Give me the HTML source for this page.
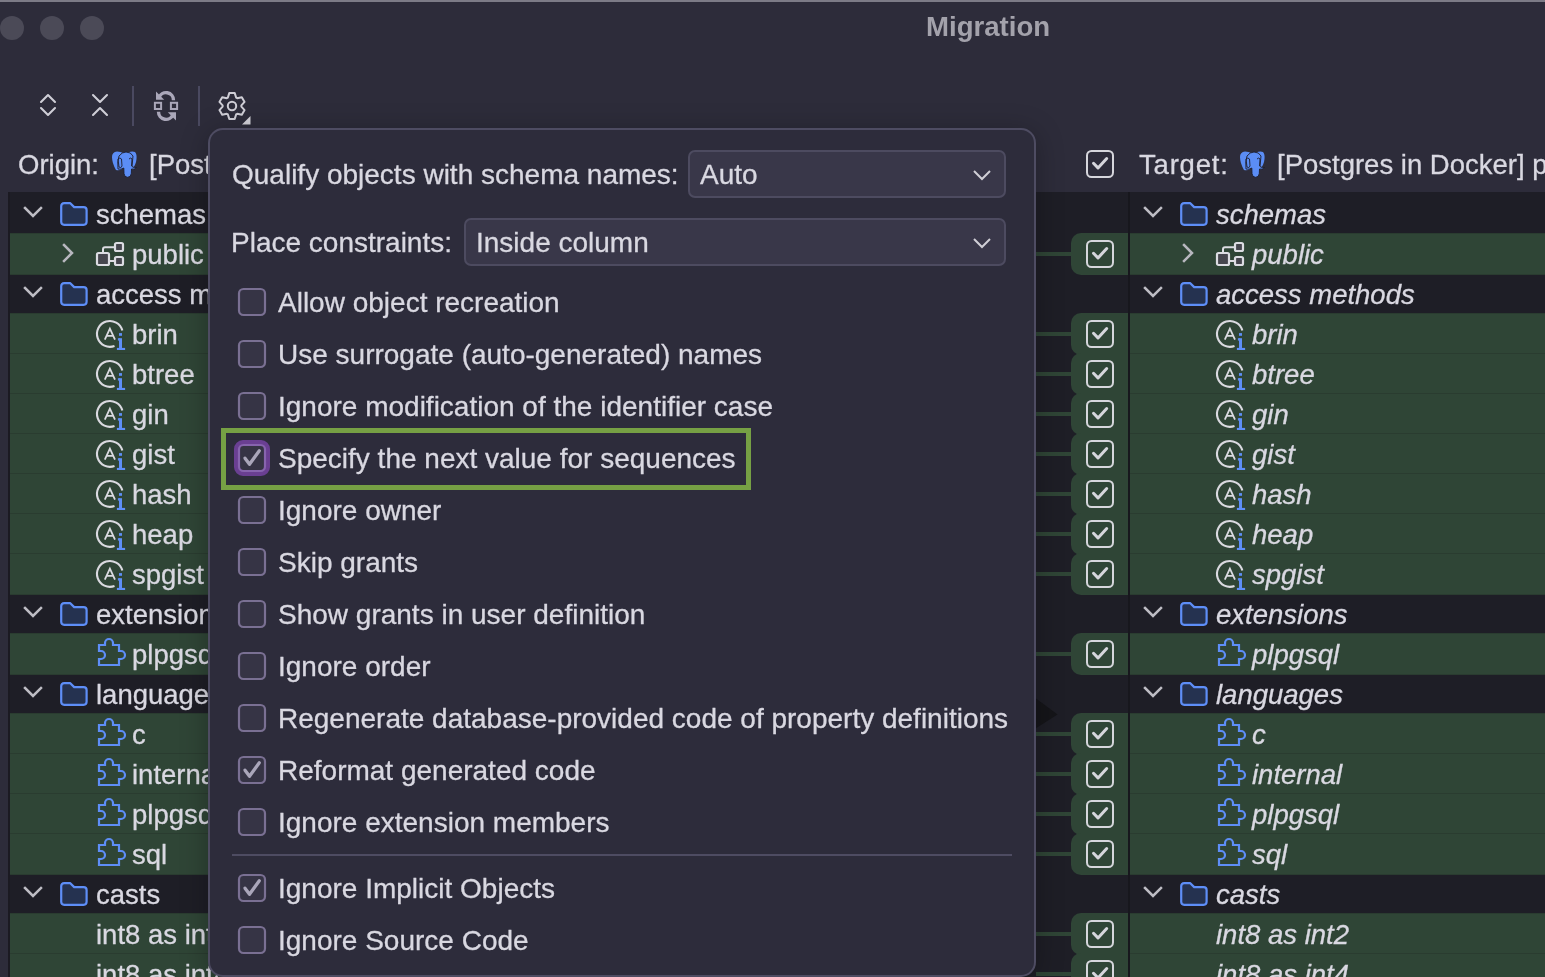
<!DOCTYPE html><html><head><meta charset="utf-8"><style>
html,body{margin:0;padding:0;}
body{width:1545px;height:977px;overflow:hidden;position:relative;background:#2d2c3a;font-family:"Liberation Sans", sans-serif;}
.t{position:absolute;white-space:pre;line-height:1;will-change:transform;-webkit-text-stroke:0.3px currentColor;}
svg{overflow:visible}
</style></head><body>
<div style="position:absolute;left:0px;top:0px;width:1545px;height:2px;background:#7c7b86;"></div>
<div style="position:absolute;left:0px;top:16px;width:24px;height:24px;border-radius:50%;background:#4b4a57"></div>
<div style="position:absolute;left:40px;top:16px;width:24px;height:24px;border-radius:50%;background:#4b4a57"></div>
<div style="position:absolute;left:80px;top:16px;width:24px;height:24px;border-radius:50%;background:#4b4a57"></div>
<div class="t" style="left:926px;top:13.24px;font-size:27.6px;color:#a3a2ab;font-weight:bold;font-style:normal;-webkit-text-stroke:0">Migration</div>
<svg style="position:absolute;left:38px;top:92px;" width="20" height="26" viewBox="0 0 20 26"><path d="M3,10 L10,3 L17,10 M3,16 L10,23 L17,16" fill="none" stroke="#cfced6" stroke-width="2.1" stroke-linecap="round" stroke-linejoin="round"/></svg>
<svg style="position:absolute;left:90px;top:92px;" width="20" height="26" viewBox="0 0 20 26"><path d="M3,3 L10,10 L17,3 M3,23 L10,16 L17,23" fill="none" stroke="#cfced6" stroke-width="2.1" stroke-linecap="round" stroke-linejoin="round"/></svg>
<div style="position:absolute;left:132px;top:86px;width:2px;height:40px;background:#4a4960;"></div>
<div style="position:absolute;left:198px;top:86px;width:2px;height:40px;background:#4a4960;"></div>
<svg style="position:absolute;left:152px;top:89px;" width="28" height="34" viewBox="0 0 28 34"><path d="M21.5,11.2 A7.5,7.5 0 0 0 6.95,8.6" fill="none" stroke="#aaa7b9" stroke-width="3.4"/><path d="M4,2.4 L4,10.8 L12.2,10.8 Z" fill="#aaa7b9"/><path d="M6.5,22.8 A7.5,7.5 0 0 0 21.05,25.4" fill="none" stroke="#aaa7b9" stroke-width="3.4"/><path d="M24,31.6 L24,23.2 L15.8,23.2 Z" fill="#aaa7b9"/><rect x="2.9" y="13.8" width="6.2" height="6.2" fill="none" stroke="#aaa7b9" stroke-width="2"/><rect x="18.9" y="13.8" width="6.2" height="6.2" fill="none" stroke="#aaa7b9" stroke-width="2"/></svg>
<svg style="position:absolute;left:218px;top:92px;" width="28" height="28" viewBox="0 0 28 28"><path d="M11.26,1.09 L16.74,1.09 L18.12,5.55 L19.26,6.21 L23.81,5.17 L26.55,9.92 L23.38,13.34 L23.38,14.66 L26.55,18.08 L23.81,22.83 L19.26,21.79 L18.12,22.45 L16.74,26.91 L11.26,26.91 L9.88,22.45 L8.74,21.79 L4.19,22.83 L1.45,18.08 L4.62,14.66 L4.62,13.34 L1.45,9.92 L4.19,5.17 L8.74,6.21 L9.88,5.55 Z" fill="none" stroke="#cfced6" stroke-width="2" stroke-linejoin="round"/><circle cx="14" cy="14" r="4.2" fill="none" stroke="#cfced6" stroke-width="2"/></svg>
<svg style="position:absolute;left:241px;top:115px;" width="10" height="10" viewBox="0 0 10 10"><path d="M9.5,1 V9.5 H1 Z" fill="#d4d3da"/></svg>
<div class="t" style="left:17.5px;top:151.02px;font-size:27.5px;color:#d9d8e1;font-weight:normal;font-style:normal;">Origin:</div>
<svg style="position:absolute;left:109.5px;top:151px;" width="28" height="28" viewBox="0 0 28 28"><path d="M2,6 Q2,1 7,0.5 Q11,0.5 13,2 L12,18 Q9,20 6,19 Q2,12 2,6 Z" fill="#5b8df5"/><path d="M18,1.5 Q22,0 25,1 Q27,3 26.5,8 Q26,14 22,18 L17,14 Z" fill="#5b8df5"/><path d="M9,5 Q12,1 16,1 Q21,1 23,5 L22,15.5 Q25,17.5 26.5,16.5 Q24.5,19 21.5,18 L21.3,22.5 Q21,26.3 17.6,26.3 Q14.2,26.3 14,22.5 L13.8,17 Q11,19 8,18 Q7,10 9,5 Z" fill="#5b8df5" stroke="#1d1d2a" stroke-width="0.9"/><path d="M8,8 Q10,6 11.5,8 L12,15 Q11,18 9,16 Z" fill="none" stroke="#1d1d2a" stroke-width="0.9"/><path d="M19,8 Q21,6 22,8 L21.5,15" fill="none" stroke="#1d1d2a" stroke-width="0.9"/></svg>
<div class="t" style="left:149px;top:151.02px;font-size:27.5px;color:#d9d8e1;font-weight:normal;font-style:normal;">[Postgres in Docker] postgres</div>
<svg style="position:absolute;left:1086px;top:150px;" width="28" height="28" viewBox="0 0 28 28"><rect x="1" y="1" width="26" height="26" rx="4.5" fill="#2d2c3a" stroke="#d6d6dc" stroke-width="2"/><path d="M7.5,13.3 L12,17.9 L20.7,8.6" fill="none" stroke="#d6d6dc" stroke-width="3" stroke-linecap="round" stroke-linejoin="round"/></svg>
<div class="t" style="left:1138.5px;top:151.02px;font-size:27.5px;color:#d9d8e1;font-weight:normal;font-style:normal;letter-spacing:0.8px">Target:</div>
<svg style="position:absolute;left:1238px;top:151px;" width="28" height="28" viewBox="0 0 28 28"><path d="M2,6 Q2,1 7,0.5 Q11,0.5 13,2 L12,18 Q9,20 6,19 Q2,12 2,6 Z" fill="#5b8df5"/><path d="M18,1.5 Q22,0 25,1 Q27,3 26.5,8 Q26,14 22,18 L17,14 Z" fill="#5b8df5"/><path d="M9,5 Q12,1 16,1 Q21,1 23,5 L22,15.5 Q25,17.5 26.5,16.5 Q24.5,19 21.5,18 L21.3,22.5 Q21,26.3 17.6,26.3 Q14.2,26.3 14,22.5 L13.8,17 Q11,19 8,18 Q7,10 9,5 Z" fill="#5b8df5" stroke="#1d1d2a" stroke-width="0.9"/><path d="M8,8 Q10,6 11.5,8 L12,15 Q11,18 9,16 Z" fill="none" stroke="#1d1d2a" stroke-width="0.9"/><path d="M19,8 Q21,6 22,8 L21.5,15" fill="none" stroke="#1d1d2a" stroke-width="0.9"/></svg>
<div class="t" style="left:1277px;top:151.02px;font-size:27.5px;color:#d9d8e1;font-weight:normal;font-style:normal;">[Postgres in Docker] postgres</div>
<div style="position:absolute;left:8px;top:192px;width:2px;height:785px;background:#1b1a22;"></div>
<div style="position:absolute;left:10px;top:192px;width:1118px;height:785px;background:#1e1e26;"></div>
<div style="position:absolute;left:1128px;top:192px;width:2px;height:785px;background:#17171d;"></div>
<div style="position:absolute;left:1130px;top:192px;width:415px;height:785px;background:#1e1e26;"></div>
<div style="position:absolute;left:10px;top:233px;width:1000px;height:42px;background:#2f4536;"></div>
<div style="position:absolute;left:10px;top:233px;width:1000px;height:1px;background:#2a3c30;"></div>
<div style="position:absolute;left:10px;top:274px;width:1000px;height:1px;background:#2a3c30;"></div>
<div style="position:absolute;left:10px;top:313px;width:1000px;height:40px;background:#2f4536;"></div>
<div style="position:absolute;left:10px;top:313px;width:1000px;height:1px;background:#2a3c30;"></div>
<div style="position:absolute;left:10px;top:353px;width:1000px;height:40px;background:#2f4536;"></div>
<div style="position:absolute;left:10px;top:353px;width:1000px;height:1px;background:#2a3c30;"></div>
<div style="position:absolute;left:10px;top:393px;width:1000px;height:40px;background:#2f4536;"></div>
<div style="position:absolute;left:10px;top:393px;width:1000px;height:1px;background:#2a3c30;"></div>
<div style="position:absolute;left:10px;top:433px;width:1000px;height:40px;background:#2f4536;"></div>
<div style="position:absolute;left:10px;top:433px;width:1000px;height:1px;background:#2a3c30;"></div>
<div style="position:absolute;left:10px;top:473px;width:1000px;height:40px;background:#2f4536;"></div>
<div style="position:absolute;left:10px;top:473px;width:1000px;height:1px;background:#2a3c30;"></div>
<div style="position:absolute;left:10px;top:513px;width:1000px;height:40px;background:#2f4536;"></div>
<div style="position:absolute;left:10px;top:513px;width:1000px;height:1px;background:#2a3c30;"></div>
<div style="position:absolute;left:10px;top:553px;width:1000px;height:42px;background:#2f4536;"></div>
<div style="position:absolute;left:10px;top:553px;width:1000px;height:1px;background:#2a3c30;"></div>
<div style="position:absolute;left:10px;top:594px;width:1000px;height:1px;background:#2a3c30;"></div>
<div style="position:absolute;left:10px;top:633px;width:1000px;height:42px;background:#2f4536;"></div>
<div style="position:absolute;left:10px;top:633px;width:1000px;height:1px;background:#2a3c30;"></div>
<div style="position:absolute;left:10px;top:674px;width:1000px;height:1px;background:#2a3c30;"></div>
<div style="position:absolute;left:10px;top:713px;width:1000px;height:40px;background:#2f4536;"></div>
<div style="position:absolute;left:10px;top:713px;width:1000px;height:1px;background:#2a3c30;"></div>
<div style="position:absolute;left:10px;top:753px;width:1000px;height:40px;background:#2f4536;"></div>
<div style="position:absolute;left:10px;top:753px;width:1000px;height:1px;background:#2a3c30;"></div>
<div style="position:absolute;left:10px;top:793px;width:1000px;height:40px;background:#2f4536;"></div>
<div style="position:absolute;left:10px;top:793px;width:1000px;height:1px;background:#2a3c30;"></div>
<div style="position:absolute;left:10px;top:833px;width:1000px;height:42px;background:#2f4536;"></div>
<div style="position:absolute;left:10px;top:833px;width:1000px;height:1px;background:#2a3c30;"></div>
<div style="position:absolute;left:10px;top:874px;width:1000px;height:1px;background:#2a3c30;"></div>
<div style="position:absolute;left:10px;top:913px;width:1000px;height:40px;background:#2f4536;"></div>
<div style="position:absolute;left:10px;top:913px;width:1000px;height:1px;background:#2a3c30;"></div>
<div style="position:absolute;left:10px;top:953px;width:1000px;height:42px;background:#2f4536;"></div>
<div style="position:absolute;left:10px;top:953px;width:1000px;height:1px;background:#2a3c30;"></div>
<div style="position:absolute;left:10px;top:994px;width:1000px;height:1px;background:#2a3c30;"></div>
<svg style="position:absolute;left:23px;top:206px;" width="20" height="14" viewBox="0 0 20 14"><path d="M2,2 L10,10 L18,2" fill="none" stroke="#bebdc4" stroke-width="2.5" stroke-linecap="square"/></svg>
<svg style="position:absolute;left:60px;top:202px;" width="28" height="24" viewBox="0 0 28 24"><path d="M1.2,4.2 Q1.2,1.2 4.2,1.2 H10.3 L14.2,5.1 H23.6 Q26.6,5.1 26.6,8.1 V19.8 Q26.6,22.8 23.6,22.8 H4.2 Q1.2,22.8 1.2,19.8 Z" fill="#253250" stroke="#5e8ef7" stroke-width="2.2" stroke-linejoin="round"/></svg>
<div class="t" style="left:95.5px;top:201.22px;font-size:27.5px;color:#d9d8e1;font-weight:normal;font-style:normal;">schemas</div>
<svg style="position:absolute;left:61.5px;top:243px;" width="14" height="20" viewBox="0 0 14 20"><path d="M2,2 L10,10 L2,18" fill="none" stroke="#b8b7bf" stroke-width="2.5" stroke-linecap="square"/></svg>
<svg style="position:absolute;left:95px;top:241px;" width="30" height="26" viewBox="0 0 30 26"><path d="M8,11 V8.3 Q8,6.3 10,6.3 H20 M15,20.1 H20" fill="none" stroke="#dcdce2" stroke-width="2"/><rect x="2" y="12" width="12" height="12" fill="#46464e" stroke="#dcdce2" stroke-width="2.2" rx="1.5"/><rect x="20" y="2" width="8" height="8" fill="#46464e" stroke="#dcdce2" stroke-width="2.2" rx="1.5"/><rect x="20" y="16" width="8" height="8" fill="#46464e" stroke="#dcdce2" stroke-width="2.2" rx="1.5"/></svg>
<div class="t" style="left:132px;top:241.22px;font-size:27.5px;color:#d9d8e1;font-weight:normal;font-style:normal;">public</div>
<svg style="position:absolute;left:23px;top:286px;" width="20" height="14" viewBox="0 0 20 14"><path d="M2,2 L10,10 L18,2" fill="none" stroke="#bebdc4" stroke-width="2.5" stroke-linecap="square"/></svg>
<svg style="position:absolute;left:60px;top:282px;" width="28" height="24" viewBox="0 0 28 24"><path d="M1.2,4.2 Q1.2,1.2 4.2,1.2 H10.3 L14.2,5.1 H23.6 Q26.6,5.1 26.6,8.1 V19.8 Q26.6,22.8 23.6,22.8 H4.2 Q1.2,22.8 1.2,19.8 Z" fill="#253250" stroke="#5e8ef7" stroke-width="2.2" stroke-linejoin="round"/></svg>
<div class="t" style="left:95.5px;top:281.22px;font-size:27.5px;color:#d9d8e1;font-weight:normal;font-style:normal;">access methods</div>
<svg style="position:absolute;left:94px;top:317px;" width="34" height="34" viewBox="0 0 34 34"><path d="M20.52,28.94 A12.9,12.9 0 1 1 28.36,13.56" fill="none" stroke="#dadae0" stroke-width="2.1"/><path d="M10.8,22.7 L15.9,11.6 L21,22.7 M12.6,18.8 H19.2" fill="none" stroke="#dadae0" stroke-width="1.8"/><rect x="25" y="16.1" width="3" height="2.7" fill="#5e8ef7"/><rect x="25" y="21.2" width="3" height="10" fill="#5e8ef7"/><rect x="23.9" y="21.2" width="2" height="2.4" fill="#5e8ef7"/><rect x="22.9" y="30.9" width="8.2" height="2.1" fill="#5e8ef7"/></svg>
<div class="t" style="left:132px;top:321.22px;font-size:27.5px;color:#d9d8e1;font-weight:normal;font-style:normal;">brin</div>
<svg style="position:absolute;left:94px;top:357px;" width="34" height="34" viewBox="0 0 34 34"><path d="M20.52,28.94 A12.9,12.9 0 1 1 28.36,13.56" fill="none" stroke="#dadae0" stroke-width="2.1"/><path d="M10.8,22.7 L15.9,11.6 L21,22.7 M12.6,18.8 H19.2" fill="none" stroke="#dadae0" stroke-width="1.8"/><rect x="25" y="16.1" width="3" height="2.7" fill="#5e8ef7"/><rect x="25" y="21.2" width="3" height="10" fill="#5e8ef7"/><rect x="23.9" y="21.2" width="2" height="2.4" fill="#5e8ef7"/><rect x="22.9" y="30.9" width="8.2" height="2.1" fill="#5e8ef7"/></svg>
<div class="t" style="left:132px;top:361.22px;font-size:27.5px;color:#d9d8e1;font-weight:normal;font-style:normal;">btree</div>
<svg style="position:absolute;left:94px;top:397px;" width="34" height="34" viewBox="0 0 34 34"><path d="M20.52,28.94 A12.9,12.9 0 1 1 28.36,13.56" fill="none" stroke="#dadae0" stroke-width="2.1"/><path d="M10.8,22.7 L15.9,11.6 L21,22.7 M12.6,18.8 H19.2" fill="none" stroke="#dadae0" stroke-width="1.8"/><rect x="25" y="16.1" width="3" height="2.7" fill="#5e8ef7"/><rect x="25" y="21.2" width="3" height="10" fill="#5e8ef7"/><rect x="23.9" y="21.2" width="2" height="2.4" fill="#5e8ef7"/><rect x="22.9" y="30.9" width="8.2" height="2.1" fill="#5e8ef7"/></svg>
<div class="t" style="left:132px;top:401.22px;font-size:27.5px;color:#d9d8e1;font-weight:normal;font-style:normal;">gin</div>
<svg style="position:absolute;left:94px;top:437px;" width="34" height="34" viewBox="0 0 34 34"><path d="M20.52,28.94 A12.9,12.9 0 1 1 28.36,13.56" fill="none" stroke="#dadae0" stroke-width="2.1"/><path d="M10.8,22.7 L15.9,11.6 L21,22.7 M12.6,18.8 H19.2" fill="none" stroke="#dadae0" stroke-width="1.8"/><rect x="25" y="16.1" width="3" height="2.7" fill="#5e8ef7"/><rect x="25" y="21.2" width="3" height="10" fill="#5e8ef7"/><rect x="23.9" y="21.2" width="2" height="2.4" fill="#5e8ef7"/><rect x="22.9" y="30.9" width="8.2" height="2.1" fill="#5e8ef7"/></svg>
<div class="t" style="left:132px;top:441.22px;font-size:27.5px;color:#d9d8e1;font-weight:normal;font-style:normal;">gist</div>
<svg style="position:absolute;left:94px;top:477px;" width="34" height="34" viewBox="0 0 34 34"><path d="M20.52,28.94 A12.9,12.9 0 1 1 28.36,13.56" fill="none" stroke="#dadae0" stroke-width="2.1"/><path d="M10.8,22.7 L15.9,11.6 L21,22.7 M12.6,18.8 H19.2" fill="none" stroke="#dadae0" stroke-width="1.8"/><rect x="25" y="16.1" width="3" height="2.7" fill="#5e8ef7"/><rect x="25" y="21.2" width="3" height="10" fill="#5e8ef7"/><rect x="23.9" y="21.2" width="2" height="2.4" fill="#5e8ef7"/><rect x="22.9" y="30.9" width="8.2" height="2.1" fill="#5e8ef7"/></svg>
<div class="t" style="left:132px;top:481.22px;font-size:27.5px;color:#d9d8e1;font-weight:normal;font-style:normal;">hash</div>
<svg style="position:absolute;left:94px;top:517px;" width="34" height="34" viewBox="0 0 34 34"><path d="M20.52,28.94 A12.9,12.9 0 1 1 28.36,13.56" fill="none" stroke="#dadae0" stroke-width="2.1"/><path d="M10.8,22.7 L15.9,11.6 L21,22.7 M12.6,18.8 H19.2" fill="none" stroke="#dadae0" stroke-width="1.8"/><rect x="25" y="16.1" width="3" height="2.7" fill="#5e8ef7"/><rect x="25" y="21.2" width="3" height="10" fill="#5e8ef7"/><rect x="23.9" y="21.2" width="2" height="2.4" fill="#5e8ef7"/><rect x="22.9" y="30.9" width="8.2" height="2.1" fill="#5e8ef7"/></svg>
<div class="t" style="left:132px;top:521.22px;font-size:27.5px;color:#d9d8e1;font-weight:normal;font-style:normal;">heap</div>
<svg style="position:absolute;left:94px;top:557px;" width="34" height="34" viewBox="0 0 34 34"><path d="M20.52,28.94 A12.9,12.9 0 1 1 28.36,13.56" fill="none" stroke="#dadae0" stroke-width="2.1"/><path d="M10.8,22.7 L15.9,11.6 L21,22.7 M12.6,18.8 H19.2" fill="none" stroke="#dadae0" stroke-width="1.8"/><rect x="25" y="16.1" width="3" height="2.7" fill="#5e8ef7"/><rect x="25" y="21.2" width="3" height="10" fill="#5e8ef7"/><rect x="23.9" y="21.2" width="2" height="2.4" fill="#5e8ef7"/><rect x="22.9" y="30.9" width="8.2" height="2.1" fill="#5e8ef7"/></svg>
<div class="t" style="left:132px;top:561.22px;font-size:27.5px;color:#d9d8e1;font-weight:normal;font-style:normal;">spgist</div>
<svg style="position:absolute;left:23px;top:606px;" width="20" height="14" viewBox="0 0 20 14"><path d="M2,2 L10,10 L18,2" fill="none" stroke="#bebdc4" stroke-width="2.5" stroke-linecap="square"/></svg>
<svg style="position:absolute;left:60px;top:602px;" width="28" height="24" viewBox="0 0 28 24"><path d="M1.2,4.2 Q1.2,1.2 4.2,1.2 H10.3 L14.2,5.1 H23.6 Q26.6,5.1 26.6,8.1 V19.8 Q26.6,22.8 23.6,22.8 H4.2 Q1.2,22.8 1.2,19.8 Z" fill="#253250" stroke="#5e8ef7" stroke-width="2.2" stroke-linejoin="round"/></svg>
<div class="t" style="left:95.5px;top:601.22px;font-size:27.5px;color:#d9d8e1;font-weight:normal;font-style:normal;">extensions</div>
<svg style="position:absolute;left:96px;top:636px;" width="32" height="32" viewBox="0 0 32 32"><path d="M3,9 H9 V7 A4,4 0 0 1 17,7 V9 H23 V15 H25 A4,4 0 0 1 25,23 H23 V29 H3 V23 H5 A4,4 0 0 0 5,15 H3 Z" fill="none" stroke="#5e8ef7" stroke-width="2.2" stroke-linejoin="miter"/></svg>
<div class="t" style="left:132px;top:641.22px;font-size:27.5px;color:#d9d8e1;font-weight:normal;font-style:normal;">plpgsql</div>
<svg style="position:absolute;left:23px;top:686px;" width="20" height="14" viewBox="0 0 20 14"><path d="M2,2 L10,10 L18,2" fill="none" stroke="#bebdc4" stroke-width="2.5" stroke-linecap="square"/></svg>
<svg style="position:absolute;left:60px;top:682px;" width="28" height="24" viewBox="0 0 28 24"><path d="M1.2,4.2 Q1.2,1.2 4.2,1.2 H10.3 L14.2,5.1 H23.6 Q26.6,5.1 26.6,8.1 V19.8 Q26.6,22.8 23.6,22.8 H4.2 Q1.2,22.8 1.2,19.8 Z" fill="#253250" stroke="#5e8ef7" stroke-width="2.2" stroke-linejoin="round"/></svg>
<div class="t" style="left:95.5px;top:681.22px;font-size:27.5px;color:#d9d8e1;font-weight:normal;font-style:normal;">languages</div>
<svg style="position:absolute;left:96px;top:716px;" width="32" height="32" viewBox="0 0 32 32"><path d="M3,9 H9 V7 A4,4 0 0 1 17,7 V9 H23 V15 H25 A4,4 0 0 1 25,23 H23 V29 H3 V23 H5 A4,4 0 0 0 5,15 H3 Z" fill="none" stroke="#5e8ef7" stroke-width="2.2" stroke-linejoin="miter"/></svg>
<div class="t" style="left:132px;top:721.22px;font-size:27.5px;color:#d9d8e1;font-weight:normal;font-style:normal;">c</div>
<svg style="position:absolute;left:96px;top:756px;" width="32" height="32" viewBox="0 0 32 32"><path d="M3,9 H9 V7 A4,4 0 0 1 17,7 V9 H23 V15 H25 A4,4 0 0 1 25,23 H23 V29 H3 V23 H5 A4,4 0 0 0 5,15 H3 Z" fill="none" stroke="#5e8ef7" stroke-width="2.2" stroke-linejoin="miter"/></svg>
<div class="t" style="left:132px;top:761.22px;font-size:27.5px;color:#d9d8e1;font-weight:normal;font-style:normal;">internal</div>
<svg style="position:absolute;left:96px;top:796px;" width="32" height="32" viewBox="0 0 32 32"><path d="M3,9 H9 V7 A4,4 0 0 1 17,7 V9 H23 V15 H25 A4,4 0 0 1 25,23 H23 V29 H3 V23 H5 A4,4 0 0 0 5,15 H3 Z" fill="none" stroke="#5e8ef7" stroke-width="2.2" stroke-linejoin="miter"/></svg>
<div class="t" style="left:132px;top:801.22px;font-size:27.5px;color:#d9d8e1;font-weight:normal;font-style:normal;">plpgsql</div>
<svg style="position:absolute;left:96px;top:836px;" width="32" height="32" viewBox="0 0 32 32"><path d="M3,9 H9 V7 A4,4 0 0 1 17,7 V9 H23 V15 H25 A4,4 0 0 1 25,23 H23 V29 H3 V23 H5 A4,4 0 0 0 5,15 H3 Z" fill="none" stroke="#5e8ef7" stroke-width="2.2" stroke-linejoin="miter"/></svg>
<div class="t" style="left:132px;top:841.22px;font-size:27.5px;color:#d9d8e1;font-weight:normal;font-style:normal;">sql</div>
<svg style="position:absolute;left:23px;top:886px;" width="20" height="14" viewBox="0 0 20 14"><path d="M2,2 L10,10 L18,2" fill="none" stroke="#bebdc4" stroke-width="2.5" stroke-linecap="square"/></svg>
<svg style="position:absolute;left:60px;top:882px;" width="28" height="24" viewBox="0 0 28 24"><path d="M1.2,4.2 Q1.2,1.2 4.2,1.2 H10.3 L14.2,5.1 H23.6 Q26.6,5.1 26.6,8.1 V19.8 Q26.6,22.8 23.6,22.8 H4.2 Q1.2,22.8 1.2,19.8 Z" fill="#253250" stroke="#5e8ef7" stroke-width="2.2" stroke-linejoin="round"/></svg>
<div class="t" style="left:95.5px;top:881.22px;font-size:27.5px;color:#d9d8e1;font-weight:normal;font-style:normal;">casts</div>
<div class="t" style="left:95.5px;top:921.22px;font-size:27.5px;color:#d9d8e1;font-weight:normal;font-style:normal;">int8 as int2</div>
<div class="t" style="left:95.5px;top:961.22px;font-size:27.5px;color:#d9d8e1;font-weight:normal;font-style:normal;">int8 as int4</div>
<div style="position:absolute;left:1130px;top:233px;width:415px;height:42px;background:#2f4536;"></div>
<div style="position:absolute;left:1130px;top:233px;width:415px;height:1px;background:#2a3c30;"></div>
<div style="position:absolute;left:1130px;top:274px;width:415px;height:1px;background:#2a3c30;"></div>
<div style="position:absolute;left:1130px;top:313px;width:415px;height:40px;background:#2f4536;"></div>
<div style="position:absolute;left:1130px;top:313px;width:415px;height:1px;background:#2a3c30;"></div>
<div style="position:absolute;left:1130px;top:353px;width:415px;height:40px;background:#2f4536;"></div>
<div style="position:absolute;left:1130px;top:353px;width:415px;height:1px;background:#2a3c30;"></div>
<div style="position:absolute;left:1130px;top:393px;width:415px;height:40px;background:#2f4536;"></div>
<div style="position:absolute;left:1130px;top:393px;width:415px;height:1px;background:#2a3c30;"></div>
<div style="position:absolute;left:1130px;top:433px;width:415px;height:40px;background:#2f4536;"></div>
<div style="position:absolute;left:1130px;top:433px;width:415px;height:1px;background:#2a3c30;"></div>
<div style="position:absolute;left:1130px;top:473px;width:415px;height:40px;background:#2f4536;"></div>
<div style="position:absolute;left:1130px;top:473px;width:415px;height:1px;background:#2a3c30;"></div>
<div style="position:absolute;left:1130px;top:513px;width:415px;height:40px;background:#2f4536;"></div>
<div style="position:absolute;left:1130px;top:513px;width:415px;height:1px;background:#2a3c30;"></div>
<div style="position:absolute;left:1130px;top:553px;width:415px;height:42px;background:#2f4536;"></div>
<div style="position:absolute;left:1130px;top:553px;width:415px;height:1px;background:#2a3c30;"></div>
<div style="position:absolute;left:1130px;top:594px;width:415px;height:1px;background:#2a3c30;"></div>
<div style="position:absolute;left:1130px;top:633px;width:415px;height:42px;background:#2f4536;"></div>
<div style="position:absolute;left:1130px;top:633px;width:415px;height:1px;background:#2a3c30;"></div>
<div style="position:absolute;left:1130px;top:674px;width:415px;height:1px;background:#2a3c30;"></div>
<div style="position:absolute;left:1130px;top:713px;width:415px;height:40px;background:#2f4536;"></div>
<div style="position:absolute;left:1130px;top:713px;width:415px;height:1px;background:#2a3c30;"></div>
<div style="position:absolute;left:1130px;top:753px;width:415px;height:40px;background:#2f4536;"></div>
<div style="position:absolute;left:1130px;top:753px;width:415px;height:1px;background:#2a3c30;"></div>
<div style="position:absolute;left:1130px;top:793px;width:415px;height:40px;background:#2f4536;"></div>
<div style="position:absolute;left:1130px;top:793px;width:415px;height:1px;background:#2a3c30;"></div>
<div style="position:absolute;left:1130px;top:833px;width:415px;height:42px;background:#2f4536;"></div>
<div style="position:absolute;left:1130px;top:833px;width:415px;height:1px;background:#2a3c30;"></div>
<div style="position:absolute;left:1130px;top:874px;width:415px;height:1px;background:#2a3c30;"></div>
<div style="position:absolute;left:1130px;top:913px;width:415px;height:40px;background:#2f4536;"></div>
<div style="position:absolute;left:1130px;top:913px;width:415px;height:1px;background:#2a3c30;"></div>
<div style="position:absolute;left:1130px;top:953px;width:415px;height:42px;background:#2f4536;"></div>
<div style="position:absolute;left:1130px;top:953px;width:415px;height:1px;background:#2a3c30;"></div>
<div style="position:absolute;left:1130px;top:994px;width:415px;height:1px;background:#2a3c30;"></div>
<svg style="position:absolute;left:1143px;top:206px;" width="20" height="14" viewBox="0 0 20 14"><path d="M2,2 L10,10 L18,2" fill="none" stroke="#bebdc4" stroke-width="2.5" stroke-linecap="square"/></svg>
<svg style="position:absolute;left:1180px;top:202px;" width="28" height="24" viewBox="0 0 28 24"><path d="M1.2,4.2 Q1.2,1.2 4.2,1.2 H10.3 L14.2,5.1 H23.6 Q26.6,5.1 26.6,8.1 V19.8 Q26.6,22.8 23.6,22.8 H4.2 Q1.2,22.8 1.2,19.8 Z" fill="#253250" stroke="#5e8ef7" stroke-width="2.2" stroke-linejoin="round"/></svg>
<div class="t" style="left:1215.5px;top:201.22px;font-size:27.5px;color:#d9d8e1;font-weight:normal;font-style:italic;">schemas</div>
<svg style="position:absolute;left:1181.5px;top:243px;" width="14" height="20" viewBox="0 0 14 20"><path d="M2,2 L10,10 L2,18" fill="none" stroke="#b8b7bf" stroke-width="2.5" stroke-linecap="square"/></svg>
<svg style="position:absolute;left:1215px;top:241px;" width="30" height="26" viewBox="0 0 30 26"><path d="M8,11 V8.3 Q8,6.3 10,6.3 H20 M15,20.1 H20" fill="none" stroke="#dcdce2" stroke-width="2"/><rect x="2" y="12" width="12" height="12" fill="#46464e" stroke="#dcdce2" stroke-width="2.2" rx="1.5"/><rect x="20" y="2" width="8" height="8" fill="#46464e" stroke="#dcdce2" stroke-width="2.2" rx="1.5"/><rect x="20" y="16" width="8" height="8" fill="#46464e" stroke="#dcdce2" stroke-width="2.2" rx="1.5"/></svg>
<div class="t" style="left:1252px;top:241.22px;font-size:27.5px;color:#d9d8e1;font-weight:normal;font-style:italic;">public</div>
<svg style="position:absolute;left:1143px;top:286px;" width="20" height="14" viewBox="0 0 20 14"><path d="M2,2 L10,10 L18,2" fill="none" stroke="#bebdc4" stroke-width="2.5" stroke-linecap="square"/></svg>
<svg style="position:absolute;left:1180px;top:282px;" width="28" height="24" viewBox="0 0 28 24"><path d="M1.2,4.2 Q1.2,1.2 4.2,1.2 H10.3 L14.2,5.1 H23.6 Q26.6,5.1 26.6,8.1 V19.8 Q26.6,22.8 23.6,22.8 H4.2 Q1.2,22.8 1.2,19.8 Z" fill="#253250" stroke="#5e8ef7" stroke-width="2.2" stroke-linejoin="round"/></svg>
<div class="t" style="left:1215.5px;top:281.22px;font-size:27.5px;color:#d9d8e1;font-weight:normal;font-style:italic;">access methods</div>
<svg style="position:absolute;left:1214px;top:317px;" width="34" height="34" viewBox="0 0 34 34"><path d="M20.52,28.94 A12.9,12.9 0 1 1 28.36,13.56" fill="none" stroke="#dadae0" stroke-width="2.1"/><path d="M10.8,22.7 L15.9,11.6 L21,22.7 M12.6,18.8 H19.2" fill="none" stroke="#dadae0" stroke-width="1.8"/><rect x="25" y="16.1" width="3" height="2.7" fill="#5e8ef7"/><rect x="25" y="21.2" width="3" height="10" fill="#5e8ef7"/><rect x="23.9" y="21.2" width="2" height="2.4" fill="#5e8ef7"/><rect x="22.9" y="30.9" width="8.2" height="2.1" fill="#5e8ef7"/></svg>
<div class="t" style="left:1252px;top:321.22px;font-size:27.5px;color:#d9d8e1;font-weight:normal;font-style:italic;">brin</div>
<svg style="position:absolute;left:1214px;top:357px;" width="34" height="34" viewBox="0 0 34 34"><path d="M20.52,28.94 A12.9,12.9 0 1 1 28.36,13.56" fill="none" stroke="#dadae0" stroke-width="2.1"/><path d="M10.8,22.7 L15.9,11.6 L21,22.7 M12.6,18.8 H19.2" fill="none" stroke="#dadae0" stroke-width="1.8"/><rect x="25" y="16.1" width="3" height="2.7" fill="#5e8ef7"/><rect x="25" y="21.2" width="3" height="10" fill="#5e8ef7"/><rect x="23.9" y="21.2" width="2" height="2.4" fill="#5e8ef7"/><rect x="22.9" y="30.9" width="8.2" height="2.1" fill="#5e8ef7"/></svg>
<div class="t" style="left:1252px;top:361.22px;font-size:27.5px;color:#d9d8e1;font-weight:normal;font-style:italic;">btree</div>
<svg style="position:absolute;left:1214px;top:397px;" width="34" height="34" viewBox="0 0 34 34"><path d="M20.52,28.94 A12.9,12.9 0 1 1 28.36,13.56" fill="none" stroke="#dadae0" stroke-width="2.1"/><path d="M10.8,22.7 L15.9,11.6 L21,22.7 M12.6,18.8 H19.2" fill="none" stroke="#dadae0" stroke-width="1.8"/><rect x="25" y="16.1" width="3" height="2.7" fill="#5e8ef7"/><rect x="25" y="21.2" width="3" height="10" fill="#5e8ef7"/><rect x="23.9" y="21.2" width="2" height="2.4" fill="#5e8ef7"/><rect x="22.9" y="30.9" width="8.2" height="2.1" fill="#5e8ef7"/></svg>
<div class="t" style="left:1252px;top:401.22px;font-size:27.5px;color:#d9d8e1;font-weight:normal;font-style:italic;">gin</div>
<svg style="position:absolute;left:1214px;top:437px;" width="34" height="34" viewBox="0 0 34 34"><path d="M20.52,28.94 A12.9,12.9 0 1 1 28.36,13.56" fill="none" stroke="#dadae0" stroke-width="2.1"/><path d="M10.8,22.7 L15.9,11.6 L21,22.7 M12.6,18.8 H19.2" fill="none" stroke="#dadae0" stroke-width="1.8"/><rect x="25" y="16.1" width="3" height="2.7" fill="#5e8ef7"/><rect x="25" y="21.2" width="3" height="10" fill="#5e8ef7"/><rect x="23.9" y="21.2" width="2" height="2.4" fill="#5e8ef7"/><rect x="22.9" y="30.9" width="8.2" height="2.1" fill="#5e8ef7"/></svg>
<div class="t" style="left:1252px;top:441.22px;font-size:27.5px;color:#d9d8e1;font-weight:normal;font-style:italic;">gist</div>
<svg style="position:absolute;left:1214px;top:477px;" width="34" height="34" viewBox="0 0 34 34"><path d="M20.52,28.94 A12.9,12.9 0 1 1 28.36,13.56" fill="none" stroke="#dadae0" stroke-width="2.1"/><path d="M10.8,22.7 L15.9,11.6 L21,22.7 M12.6,18.8 H19.2" fill="none" stroke="#dadae0" stroke-width="1.8"/><rect x="25" y="16.1" width="3" height="2.7" fill="#5e8ef7"/><rect x="25" y="21.2" width="3" height="10" fill="#5e8ef7"/><rect x="23.9" y="21.2" width="2" height="2.4" fill="#5e8ef7"/><rect x="22.9" y="30.9" width="8.2" height="2.1" fill="#5e8ef7"/></svg>
<div class="t" style="left:1252px;top:481.22px;font-size:27.5px;color:#d9d8e1;font-weight:normal;font-style:italic;">hash</div>
<svg style="position:absolute;left:1214px;top:517px;" width="34" height="34" viewBox="0 0 34 34"><path d="M20.52,28.94 A12.9,12.9 0 1 1 28.36,13.56" fill="none" stroke="#dadae0" stroke-width="2.1"/><path d="M10.8,22.7 L15.9,11.6 L21,22.7 M12.6,18.8 H19.2" fill="none" stroke="#dadae0" stroke-width="1.8"/><rect x="25" y="16.1" width="3" height="2.7" fill="#5e8ef7"/><rect x="25" y="21.2" width="3" height="10" fill="#5e8ef7"/><rect x="23.9" y="21.2" width="2" height="2.4" fill="#5e8ef7"/><rect x="22.9" y="30.9" width="8.2" height="2.1" fill="#5e8ef7"/></svg>
<div class="t" style="left:1252px;top:521.22px;font-size:27.5px;color:#d9d8e1;font-weight:normal;font-style:italic;">heap</div>
<svg style="position:absolute;left:1214px;top:557px;" width="34" height="34" viewBox="0 0 34 34"><path d="M20.52,28.94 A12.9,12.9 0 1 1 28.36,13.56" fill="none" stroke="#dadae0" stroke-width="2.1"/><path d="M10.8,22.7 L15.9,11.6 L21,22.7 M12.6,18.8 H19.2" fill="none" stroke="#dadae0" stroke-width="1.8"/><rect x="25" y="16.1" width="3" height="2.7" fill="#5e8ef7"/><rect x="25" y="21.2" width="3" height="10" fill="#5e8ef7"/><rect x="23.9" y="21.2" width="2" height="2.4" fill="#5e8ef7"/><rect x="22.9" y="30.9" width="8.2" height="2.1" fill="#5e8ef7"/></svg>
<div class="t" style="left:1252px;top:561.22px;font-size:27.5px;color:#d9d8e1;font-weight:normal;font-style:italic;">spgist</div>
<svg style="position:absolute;left:1143px;top:606px;" width="20" height="14" viewBox="0 0 20 14"><path d="M2,2 L10,10 L18,2" fill="none" stroke="#bebdc4" stroke-width="2.5" stroke-linecap="square"/></svg>
<svg style="position:absolute;left:1180px;top:602px;" width="28" height="24" viewBox="0 0 28 24"><path d="M1.2,4.2 Q1.2,1.2 4.2,1.2 H10.3 L14.2,5.1 H23.6 Q26.6,5.1 26.6,8.1 V19.8 Q26.6,22.8 23.6,22.8 H4.2 Q1.2,22.8 1.2,19.8 Z" fill="#253250" stroke="#5e8ef7" stroke-width="2.2" stroke-linejoin="round"/></svg>
<div class="t" style="left:1215.5px;top:601.22px;font-size:27.5px;color:#d9d8e1;font-weight:normal;font-style:italic;">extensions</div>
<svg style="position:absolute;left:1216px;top:636px;" width="32" height="32" viewBox="0 0 32 32"><path d="M3,9 H9 V7 A4,4 0 0 1 17,7 V9 H23 V15 H25 A4,4 0 0 1 25,23 H23 V29 H3 V23 H5 A4,4 0 0 0 5,15 H3 Z" fill="none" stroke="#5e8ef7" stroke-width="2.2" stroke-linejoin="miter"/></svg>
<div class="t" style="left:1252px;top:641.22px;font-size:27.5px;color:#d9d8e1;font-weight:normal;font-style:italic;">plpgsql</div>
<svg style="position:absolute;left:1143px;top:686px;" width="20" height="14" viewBox="0 0 20 14"><path d="M2,2 L10,10 L18,2" fill="none" stroke="#bebdc4" stroke-width="2.5" stroke-linecap="square"/></svg>
<svg style="position:absolute;left:1180px;top:682px;" width="28" height="24" viewBox="0 0 28 24"><path d="M1.2,4.2 Q1.2,1.2 4.2,1.2 H10.3 L14.2,5.1 H23.6 Q26.6,5.1 26.6,8.1 V19.8 Q26.6,22.8 23.6,22.8 H4.2 Q1.2,22.8 1.2,19.8 Z" fill="#253250" stroke="#5e8ef7" stroke-width="2.2" stroke-linejoin="round"/></svg>
<div class="t" style="left:1215.5px;top:681.22px;font-size:27.5px;color:#d9d8e1;font-weight:normal;font-style:italic;">languages</div>
<svg style="position:absolute;left:1216px;top:716px;" width="32" height="32" viewBox="0 0 32 32"><path d="M3,9 H9 V7 A4,4 0 0 1 17,7 V9 H23 V15 H25 A4,4 0 0 1 25,23 H23 V29 H3 V23 H5 A4,4 0 0 0 5,15 H3 Z" fill="none" stroke="#5e8ef7" stroke-width="2.2" stroke-linejoin="miter"/></svg>
<div class="t" style="left:1252px;top:721.22px;font-size:27.5px;color:#d9d8e1;font-weight:normal;font-style:italic;">c</div>
<svg style="position:absolute;left:1216px;top:756px;" width="32" height="32" viewBox="0 0 32 32"><path d="M3,9 H9 V7 A4,4 0 0 1 17,7 V9 H23 V15 H25 A4,4 0 0 1 25,23 H23 V29 H3 V23 H5 A4,4 0 0 0 5,15 H3 Z" fill="none" stroke="#5e8ef7" stroke-width="2.2" stroke-linejoin="miter"/></svg>
<div class="t" style="left:1252px;top:761.22px;font-size:27.5px;color:#d9d8e1;font-weight:normal;font-style:italic;">internal</div>
<svg style="position:absolute;left:1216px;top:796px;" width="32" height="32" viewBox="0 0 32 32"><path d="M3,9 H9 V7 A4,4 0 0 1 17,7 V9 H23 V15 H25 A4,4 0 0 1 25,23 H23 V29 H3 V23 H5 A4,4 0 0 0 5,15 H3 Z" fill="none" stroke="#5e8ef7" stroke-width="2.2" stroke-linejoin="miter"/></svg>
<div class="t" style="left:1252px;top:801.22px;font-size:27.5px;color:#d9d8e1;font-weight:normal;font-style:italic;">plpgsql</div>
<svg style="position:absolute;left:1216px;top:836px;" width="32" height="32" viewBox="0 0 32 32"><path d="M3,9 H9 V7 A4,4 0 0 1 17,7 V9 H23 V15 H25 A4,4 0 0 1 25,23 H23 V29 H3 V23 H5 A4,4 0 0 0 5,15 H3 Z" fill="none" stroke="#5e8ef7" stroke-width="2.2" stroke-linejoin="miter"/></svg>
<div class="t" style="left:1252px;top:841.22px;font-size:27.5px;color:#d9d8e1;font-weight:normal;font-style:italic;">sql</div>
<svg style="position:absolute;left:1143px;top:886px;" width="20" height="14" viewBox="0 0 20 14"><path d="M2,2 L10,10 L18,2" fill="none" stroke="#bebdc4" stroke-width="2.5" stroke-linecap="square"/></svg>
<svg style="position:absolute;left:1180px;top:882px;" width="28" height="24" viewBox="0 0 28 24"><path d="M1.2,4.2 Q1.2,1.2 4.2,1.2 H10.3 L14.2,5.1 H23.6 Q26.6,5.1 26.6,8.1 V19.8 Q26.6,22.8 23.6,22.8 H4.2 Q1.2,22.8 1.2,19.8 Z" fill="#253250" stroke="#5e8ef7" stroke-width="2.2" stroke-linejoin="round"/></svg>
<div class="t" style="left:1215.5px;top:881.22px;font-size:27.5px;color:#d9d8e1;font-weight:normal;font-style:italic;">casts</div>
<div class="t" style="left:1215.5px;top:921.22px;font-size:27.5px;color:#d9d8e1;font-weight:normal;font-style:italic;">int8 as int2</div>
<div class="t" style="left:1215.5px;top:961.22px;font-size:27.5px;color:#d9d8e1;font-weight:normal;font-style:italic;">int8 as int4</div>
<div style="position:absolute;left:1036px;top:252px;width:40px;height:4px;background:#2f4536;"></div>
<div style="position:absolute;left:1071px;top:233px;width:57px;height:42px;background:#2f4536;border-radius:10px 0 0 10px"></div>
<svg style="position:absolute;left:1086px;top:240px;" width="28" height="28" viewBox="0 0 28 28"><rect x="1" y="1" width="26" height="26" rx="4.5" fill="#2f4536" stroke="#d6d6dc" stroke-width="2"/><path d="M7.5,13.3 L12,17.9 L20.7,8.6" fill="none" stroke="#d6d6dc" stroke-width="3" stroke-linecap="round" stroke-linejoin="round"/></svg>
<div style="position:absolute;left:1036px;top:332px;width:40px;height:4px;background:#2f4536;"></div>
<div style="position:absolute;left:1071px;top:313px;width:57px;height:42px;background:#2f4536;border-radius:10px 0 0 10px"></div>
<svg style="position:absolute;left:1086px;top:320px;" width="28" height="28" viewBox="0 0 28 28"><rect x="1" y="1" width="26" height="26" rx="4.5" fill="#2f4536" stroke="#d6d6dc" stroke-width="2"/><path d="M7.5,13.3 L12,17.9 L20.7,8.6" fill="none" stroke="#d6d6dc" stroke-width="3" stroke-linecap="round" stroke-linejoin="round"/></svg>
<div style="position:absolute;left:1036px;top:372px;width:40px;height:4px;background:#2f4536;"></div>
<div style="position:absolute;left:1071px;top:353px;width:57px;height:42px;background:#2f4536;border-radius:10px 0 0 10px"></div>
<svg style="position:absolute;left:1086px;top:360px;" width="28" height="28" viewBox="0 0 28 28"><rect x="1" y="1" width="26" height="26" rx="4.5" fill="#2f4536" stroke="#d6d6dc" stroke-width="2"/><path d="M7.5,13.3 L12,17.9 L20.7,8.6" fill="none" stroke="#d6d6dc" stroke-width="3" stroke-linecap="round" stroke-linejoin="round"/></svg>
<div style="position:absolute;left:1036px;top:412px;width:40px;height:4px;background:#2f4536;"></div>
<div style="position:absolute;left:1071px;top:393px;width:57px;height:42px;background:#2f4536;border-radius:10px 0 0 10px"></div>
<svg style="position:absolute;left:1086px;top:400px;" width="28" height="28" viewBox="0 0 28 28"><rect x="1" y="1" width="26" height="26" rx="4.5" fill="#2f4536" stroke="#d6d6dc" stroke-width="2"/><path d="M7.5,13.3 L12,17.9 L20.7,8.6" fill="none" stroke="#d6d6dc" stroke-width="3" stroke-linecap="round" stroke-linejoin="round"/></svg>
<div style="position:absolute;left:1036px;top:452px;width:40px;height:4px;background:#2f4536;"></div>
<div style="position:absolute;left:1071px;top:433px;width:57px;height:42px;background:#2f4536;border-radius:10px 0 0 10px"></div>
<svg style="position:absolute;left:1086px;top:440px;" width="28" height="28" viewBox="0 0 28 28"><rect x="1" y="1" width="26" height="26" rx="4.5" fill="#2f4536" stroke="#d6d6dc" stroke-width="2"/><path d="M7.5,13.3 L12,17.9 L20.7,8.6" fill="none" stroke="#d6d6dc" stroke-width="3" stroke-linecap="round" stroke-linejoin="round"/></svg>
<div style="position:absolute;left:1036px;top:492px;width:40px;height:4px;background:#2f4536;"></div>
<div style="position:absolute;left:1071px;top:473px;width:57px;height:42px;background:#2f4536;border-radius:10px 0 0 10px"></div>
<svg style="position:absolute;left:1086px;top:480px;" width="28" height="28" viewBox="0 0 28 28"><rect x="1" y="1" width="26" height="26" rx="4.5" fill="#2f4536" stroke="#d6d6dc" stroke-width="2"/><path d="M7.5,13.3 L12,17.9 L20.7,8.6" fill="none" stroke="#d6d6dc" stroke-width="3" stroke-linecap="round" stroke-linejoin="round"/></svg>
<div style="position:absolute;left:1036px;top:532px;width:40px;height:4px;background:#2f4536;"></div>
<div style="position:absolute;left:1071px;top:513px;width:57px;height:42px;background:#2f4536;border-radius:10px 0 0 10px"></div>
<svg style="position:absolute;left:1086px;top:520px;" width="28" height="28" viewBox="0 0 28 28"><rect x="1" y="1" width="26" height="26" rx="4.5" fill="#2f4536" stroke="#d6d6dc" stroke-width="2"/><path d="M7.5,13.3 L12,17.9 L20.7,8.6" fill="none" stroke="#d6d6dc" stroke-width="3" stroke-linecap="round" stroke-linejoin="round"/></svg>
<div style="position:absolute;left:1036px;top:572px;width:40px;height:4px;background:#2f4536;"></div>
<div style="position:absolute;left:1071px;top:553px;width:57px;height:42px;background:#2f4536;border-radius:10px 0 0 10px"></div>
<svg style="position:absolute;left:1086px;top:560px;" width="28" height="28" viewBox="0 0 28 28"><rect x="1" y="1" width="26" height="26" rx="4.5" fill="#2f4536" stroke="#d6d6dc" stroke-width="2"/><path d="M7.5,13.3 L12,17.9 L20.7,8.6" fill="none" stroke="#d6d6dc" stroke-width="3" stroke-linecap="round" stroke-linejoin="round"/></svg>
<div style="position:absolute;left:1036px;top:652px;width:40px;height:4px;background:#2f4536;"></div>
<div style="position:absolute;left:1071px;top:633px;width:57px;height:42px;background:#2f4536;border-radius:10px 0 0 10px"></div>
<svg style="position:absolute;left:1086px;top:640px;" width="28" height="28" viewBox="0 0 28 28"><rect x="1" y="1" width="26" height="26" rx="4.5" fill="#2f4536" stroke="#d6d6dc" stroke-width="2"/><path d="M7.5,13.3 L12,17.9 L20.7,8.6" fill="none" stroke="#d6d6dc" stroke-width="3" stroke-linecap="round" stroke-linejoin="round"/></svg>
<div style="position:absolute;left:1036px;top:732px;width:40px;height:4px;background:#2f4536;"></div>
<div style="position:absolute;left:1071px;top:713px;width:57px;height:42px;background:#2f4536;border-radius:10px 0 0 10px"></div>
<svg style="position:absolute;left:1086px;top:720px;" width="28" height="28" viewBox="0 0 28 28"><rect x="1" y="1" width="26" height="26" rx="4.5" fill="#2f4536" stroke="#d6d6dc" stroke-width="2"/><path d="M7.5,13.3 L12,17.9 L20.7,8.6" fill="none" stroke="#d6d6dc" stroke-width="3" stroke-linecap="round" stroke-linejoin="round"/></svg>
<div style="position:absolute;left:1036px;top:772px;width:40px;height:4px;background:#2f4536;"></div>
<div style="position:absolute;left:1071px;top:753px;width:57px;height:42px;background:#2f4536;border-radius:10px 0 0 10px"></div>
<svg style="position:absolute;left:1086px;top:760px;" width="28" height="28" viewBox="0 0 28 28"><rect x="1" y="1" width="26" height="26" rx="4.5" fill="#2f4536" stroke="#d6d6dc" stroke-width="2"/><path d="M7.5,13.3 L12,17.9 L20.7,8.6" fill="none" stroke="#d6d6dc" stroke-width="3" stroke-linecap="round" stroke-linejoin="round"/></svg>
<div style="position:absolute;left:1036px;top:812px;width:40px;height:4px;background:#2f4536;"></div>
<div style="position:absolute;left:1071px;top:793px;width:57px;height:42px;background:#2f4536;border-radius:10px 0 0 10px"></div>
<svg style="position:absolute;left:1086px;top:800px;" width="28" height="28" viewBox="0 0 28 28"><rect x="1" y="1" width="26" height="26" rx="4.5" fill="#2f4536" stroke="#d6d6dc" stroke-width="2"/><path d="M7.5,13.3 L12,17.9 L20.7,8.6" fill="none" stroke="#d6d6dc" stroke-width="3" stroke-linecap="round" stroke-linejoin="round"/></svg>
<div style="position:absolute;left:1036px;top:852px;width:40px;height:4px;background:#2f4536;"></div>
<div style="position:absolute;left:1071px;top:833px;width:57px;height:42px;background:#2f4536;border-radius:10px 0 0 10px"></div>
<svg style="position:absolute;left:1086px;top:840px;" width="28" height="28" viewBox="0 0 28 28"><rect x="1" y="1" width="26" height="26" rx="4.5" fill="#2f4536" stroke="#d6d6dc" stroke-width="2"/><path d="M7.5,13.3 L12,17.9 L20.7,8.6" fill="none" stroke="#d6d6dc" stroke-width="3" stroke-linecap="round" stroke-linejoin="round"/></svg>
<div style="position:absolute;left:1036px;top:932px;width:40px;height:4px;background:#2f4536;"></div>
<div style="position:absolute;left:1071px;top:913px;width:57px;height:42px;background:#2f4536;border-radius:10px 0 0 10px"></div>
<svg style="position:absolute;left:1086px;top:920px;" width="28" height="28" viewBox="0 0 28 28"><rect x="1" y="1" width="26" height="26" rx="4.5" fill="#2f4536" stroke="#d6d6dc" stroke-width="2"/><path d="M7.5,13.3 L12,17.9 L20.7,8.6" fill="none" stroke="#d6d6dc" stroke-width="3" stroke-linecap="round" stroke-linejoin="round"/></svg>
<div style="position:absolute;left:1036px;top:972px;width:40px;height:4px;background:#2f4536;"></div>
<div style="position:absolute;left:1071px;top:953px;width:57px;height:42px;background:#2f4536;border-radius:10px 0 0 10px"></div>
<svg style="position:absolute;left:1086px;top:960px;" width="28" height="28" viewBox="0 0 28 28"><rect x="1" y="1" width="26" height="26" rx="4.5" fill="#2f4536" stroke="#d6d6dc" stroke-width="2"/><path d="M7.5,13.3 L12,17.9 L20.7,8.6" fill="none" stroke="#d6d6dc" stroke-width="3" stroke-linecap="round" stroke-linejoin="round"/></svg>
<svg style="position:absolute;left:1030px;top:690px;" width="32" height="46" viewBox="0 0 32 46"><path d="M0,4 L27.6,24.4 L0,42 Z" fill="#151519"/></svg>
<div style="position:absolute;left:208px;top:128px;width:824px;height:845px;background:#2d2c3b;border:2px solid #4e4c62;border-radius:15px;box-sizing:content-box;box-shadow:0 4px 28px rgba(0,0,0,0.28)"></div>
<div class="t" style="left:232px;top:161.00px;font-size:28px;color:#d9d8e1;font-weight:normal;font-style:normal;">Qualify objects with schema names:</div>
<div style="position:absolute;left:688px;top:150px;width:314px;height:44px;background:#393749;border:2px solid #4d4b60;border-radius:7px"></div>
<div class="t" style="left:700px;top:161.00px;font-size:28px;color:#d9d8e1;font-weight:normal;font-style:normal;">Auto</div>
<svg style="position:absolute;left:972px;top:169px;" width="20" height="12" viewBox="0 0 20 12"><path d="M2,2 L10,10 L18,2" fill="none" stroke="#d0cfd6" stroke-width="2"/></svg>
<div class="t" style="left:230.5px;top:229.00px;font-size:28px;color:#d9d8e1;font-weight:normal;font-style:normal;">Place constraints:</div>
<div style="position:absolute;left:464px;top:218px;width:538px;height:44px;background:#393749;border:2px solid #4d4b60;border-radius:7px"></div>
<div class="t" style="left:476px;top:229.00px;font-size:28px;color:#d9d8e1;font-weight:normal;font-style:normal;">Inside column</div>
<svg style="position:absolute;left:972px;top:237px;" width="20" height="12" viewBox="0 0 20 12"><path d="M2,2 L10,10 L18,2" fill="none" stroke="#d0cfd6" stroke-width="2"/></svg>
<svg style="position:absolute;left:238px;top:288px;" width="28" height="28" viewBox="0 0 28 28"><rect x="1" y="1" width="26" height="26" rx="4.5" fill="#363445" stroke="#7a7093" stroke-width="2.2"/></svg>
<div class="t" style="left:278.2px;top:289.00px;font-size:28px;color:#d9d8e1;font-weight:normal;font-style:normal;">Allow object recreation</div>
<svg style="position:absolute;left:238px;top:340px;" width="28" height="28" viewBox="0 0 28 28"><rect x="1" y="1" width="26" height="26" rx="4.5" fill="#363445" stroke="#7a7093" stroke-width="2.2"/></svg>
<div class="t" style="left:278.2px;top:341.00px;font-size:28px;color:#d9d8e1;font-weight:normal;font-style:normal;">Use surrogate (auto-generated) names</div>
<svg style="position:absolute;left:238px;top:392px;" width="28" height="28" viewBox="0 0 28 28"><rect x="1" y="1" width="26" height="26" rx="4.5" fill="#363445" stroke="#7a7093" stroke-width="2.2"/></svg>
<div class="t" style="left:278.2px;top:393.00px;font-size:28px;color:#d9d8e1;font-weight:normal;font-style:normal;">Ignore modification of the identifier case</div>
<svg style="position:absolute;left:238px;top:444px;" width="28" height="28" viewBox="0 0 28 28"><rect x="-1.5" y="-1.5" width="31" height="31" rx="6.5" fill="none" stroke="#6a3f92" stroke-width="5"/><rect x="1" y="1" width="26" height="26" rx="4.5" fill="#363445" stroke="#8764ae" stroke-width="2.2"/><path d="M7,14.2 L11.5,20.3 L21.3,6.8" fill="none" stroke="#aaa6ba" stroke-width="3.3" stroke-linecap="round" stroke-linejoin="round"/></svg>
<div class="t" style="left:278.2px;top:445.00px;font-size:28px;color:#d9d8e1;font-weight:normal;font-style:normal;">Specify the next value for sequences</div>
<svg style="position:absolute;left:238px;top:496px;" width="28" height="28" viewBox="0 0 28 28"><rect x="1" y="1" width="26" height="26" rx="4.5" fill="#363445" stroke="#7a7093" stroke-width="2.2"/></svg>
<div class="t" style="left:278.2px;top:497.00px;font-size:28px;color:#d9d8e1;font-weight:normal;font-style:normal;">Ignore owner</div>
<svg style="position:absolute;left:238px;top:548px;" width="28" height="28" viewBox="0 0 28 28"><rect x="1" y="1" width="26" height="26" rx="4.5" fill="#363445" stroke="#7a7093" stroke-width="2.2"/></svg>
<div class="t" style="left:278.2px;top:549.00px;font-size:28px;color:#d9d8e1;font-weight:normal;font-style:normal;">Skip grants</div>
<svg style="position:absolute;left:238px;top:600px;" width="28" height="28" viewBox="0 0 28 28"><rect x="1" y="1" width="26" height="26" rx="4.5" fill="#363445" stroke="#7a7093" stroke-width="2.2"/></svg>
<div class="t" style="left:278.2px;top:601.00px;font-size:28px;color:#d9d8e1;font-weight:normal;font-style:normal;">Show grants in user definition</div>
<svg style="position:absolute;left:238px;top:652px;" width="28" height="28" viewBox="0 0 28 28"><rect x="1" y="1" width="26" height="26" rx="4.5" fill="#363445" stroke="#7a7093" stroke-width="2.2"/></svg>
<div class="t" style="left:278.2px;top:653.00px;font-size:28px;color:#d9d8e1;font-weight:normal;font-style:normal;">Ignore order</div>
<svg style="position:absolute;left:238px;top:704px;" width="28" height="28" viewBox="0 0 28 28"><rect x="1" y="1" width="26" height="26" rx="4.5" fill="#363445" stroke="#7a7093" stroke-width="2.2"/></svg>
<div class="t" style="left:278.2px;top:705.00px;font-size:28px;color:#d9d8e1;font-weight:normal;font-style:normal;">Regenerate database-provided code of property definitions</div>
<svg style="position:absolute;left:238px;top:756px;" width="28" height="28" viewBox="0 0 28 28"><rect x="1" y="1" width="26" height="26" rx="4.5" fill="#363445" stroke="#7a7093" stroke-width="2.2"/><path d="M7,14.2 L11.5,20.3 L21.3,6.8" fill="none" stroke="#aaa6ba" stroke-width="3.3" stroke-linecap="round" stroke-linejoin="round"/></svg>
<div class="t" style="left:278.2px;top:757.00px;font-size:28px;color:#d9d8e1;font-weight:normal;font-style:normal;">Reformat generated code</div>
<svg style="position:absolute;left:238px;top:808px;" width="28" height="28" viewBox="0 0 28 28"><rect x="1" y="1" width="26" height="26" rx="4.5" fill="#363445" stroke="#7a7093" stroke-width="2.2"/></svg>
<div class="t" style="left:278.2px;top:809.00px;font-size:28px;color:#d9d8e1;font-weight:normal;font-style:normal;">Ignore extension members</div>
<div style="position:absolute;left:232px;top:854px;width:780px;height:2px;background:#4e4c62;"></div>
<svg style="position:absolute;left:238px;top:874px;" width="28" height="28" viewBox="0 0 28 28"><rect x="1" y="1" width="26" height="26" rx="4.5" fill="#363445" stroke="#7a7093" stroke-width="2.2"/><path d="M7,14.2 L11.5,20.3 L21.3,6.8" fill="none" stroke="#aaa6ba" stroke-width="3.3" stroke-linecap="round" stroke-linejoin="round"/></svg>
<div class="t" style="left:278.2px;top:875.00px;font-size:28px;color:#d9d8e1;font-weight:normal;font-style:normal;">Ignore Implicit Objects</div>
<svg style="position:absolute;left:238px;top:926px;" width="28" height="28" viewBox="0 0 28 28"><rect x="1" y="1" width="26" height="26" rx="4.5" fill="#363445" stroke="#7a7093" stroke-width="2.2"/></svg>
<div class="t" style="left:278.2px;top:927.00px;font-size:28px;color:#d9d8e1;font-weight:normal;font-style:normal;">Ignore Source Code</div>
<div style="position:absolute;left:221px;top:428px;width:520px;height:52px;border:5px solid #76a044"></div>
</body></html>
